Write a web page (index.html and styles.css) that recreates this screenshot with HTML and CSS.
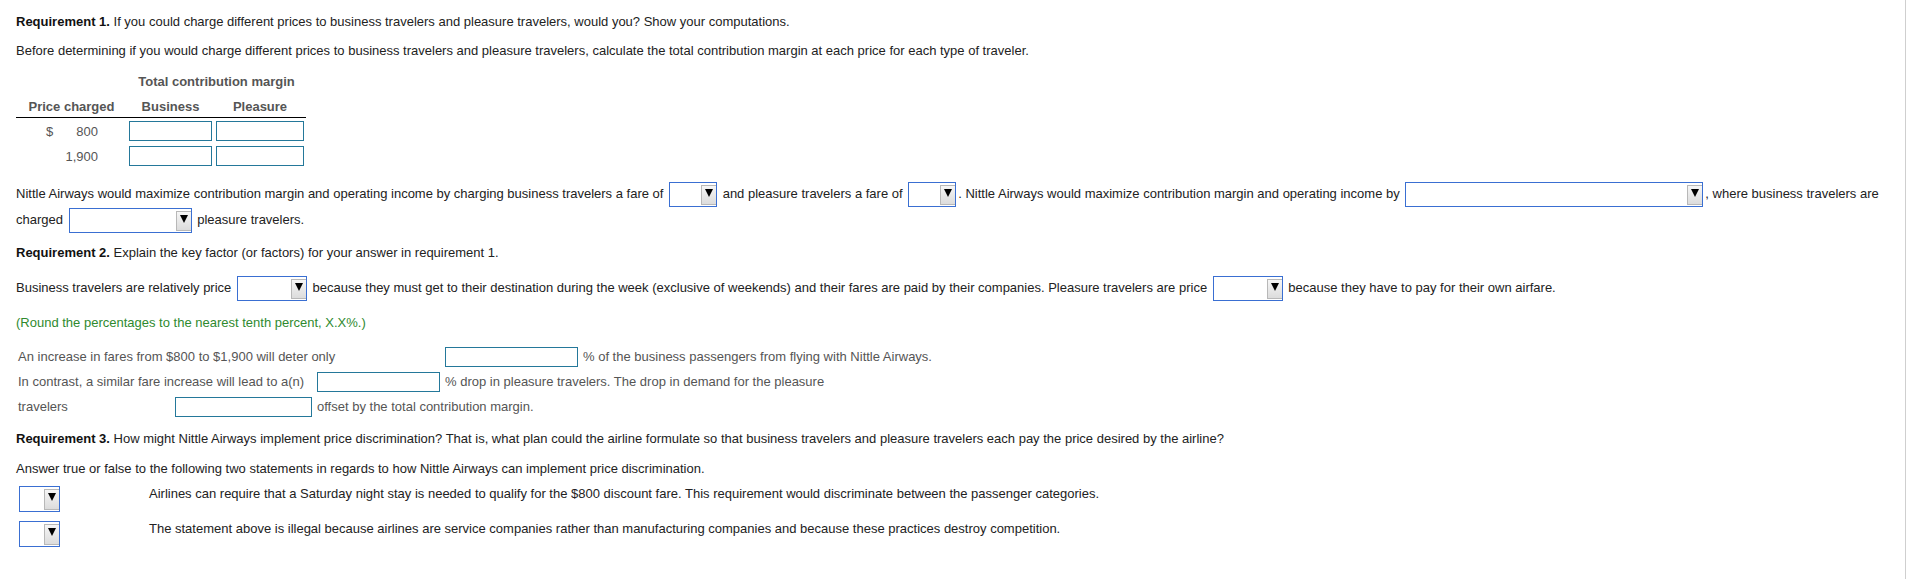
FILE: index.html
```html
<!DOCTYPE html>
<html lang="en">
<head>
<meta charset="utf-8">
<title>Requirements</title>
<link rel="stylesheet" href="styles.css">
</head>
<body>
<div class="page">
  <p class="line req-first"><b>Requirement 1.</b> If you could charge different prices to business travelers and pleasure travelers, would you? Show your computations.</p>
  <p class="line intro">Before determining if you would charge different prices to business travelers and pleasure travelers, calculate the total contribution margin at each price for each type of traveler.</p>

  <div class="cm-table">
    <div class="cm-cap">Total contribution margin</div>
    <div class="cm-head">Price charged</div>
    <div class="cm-head">Business</div>
    <div class="cm-head">Pleasure</div>

    <div class="cm-label"><span class="cur">$</span><span class="num">800</span></div>
    <div class="cm-cell"><span class="inp w83"></span></div>
    <div class="cm-cell"><span class="inp w88"></span></div>

    <div class="cm-label"><span class="num">1,900</span></div>
    <div class="cm-cell"><span class="inp w83"></span></div>
    <div class="cm-cell"><span class="inp w88"></span></div>
  </div>

  <p class="line-dd fare">Nittle Airways would maximize contribution margin and operating income by charging business travelers a fare of <span class="dd w48"><span class="dd-in"><span class="dd-btn"><svg width="8" height="8" viewBox="0 0 8 8"><polygon points="0,0 8,0 4,8" fill="#000"/></svg></span></span></span> and pleasure travelers a fare of <span class="dd w48"><span class="dd-in"><span class="dd-btn"><svg width="8" height="8" viewBox="0 0 8 8"><polygon points="0,0 8,0 4,8" fill="#000"/></svg></span></span></span>. Nittle Airways would maximize contribution margin and operating income by <span class="dd w298"><span class="dd-in"><span class="dd-btn"><svg width="8" height="8" viewBox="0 0 8 8"><polygon points="0,0 8,0 4,8" fill="#000"/></svg></span></span></span>, where business travelers are charged <span class="dd w123"><span class="dd-in"><span class="dd-btn"><svg width="8" height="8" viewBox="0 0 8 8"><polygon points="0,0 8,0 4,8" fill="#000"/></svg></span></span></span> pleasure travelers.</p>

  <p class="line req-two"><b>Requirement 2.</b> Explain the key factor (or factors) for your answer in requirement 1.</p>

  <p class="line-dd elastic">Business travelers are relatively price <span class="dd w70"><span class="dd-in"><span class="dd-btn"><svg width="8" height="8" viewBox="0 0 8 8"><polygon points="0,0 8,0 4,8" fill="#000"/></svg></span></span></span> because they must get to their destination during the week (exclusive of weekends) and their fares are paid by their companies. Pleasure travelers are price <span class="dd w70"><span class="dd-in"><span class="dd-btn"><svg width="8" height="8" viewBox="0 0 8 8"><polygon points="0,0 8,0 4,8" fill="#000"/></svg></span></span></span> because they have to pay for their own airfare.</p>

  <p class="line note">(Round the percentages to the nearest tenth percent, X.X%.)</p>

  <div class="pct">
    <div class="pt c1-4">An increase in fares from $800 to $1,900 will deter only</div>
    <div class="pi"><span class="inp w133"></span></div>
    <div class="pt">% of the business passengers from flying with Nittle Airways.</div>

    <div class="pt c1-3">In contrast, a similar fare increase will lead to a(n)</div>
    <div class="pi"><span class="inp w123"></span></div>
    <div class="pt c4-6">% drop in pleasure travelers. The drop in demand for the pleasure</div>

    <div class="pt">travelers</div>
    <div class="pi"><span class="inp w137"></span></div>
    <div class="pt c3-6">offset by the total contribution margin.</div>
  </div>

  <p class="line req-three"><b>Requirement 3.</b> How might Nittle Airways implement price discrimination? That is, what plan could the airline formulate so that business travelers and pleasure travelers each pay the price desired by the airline?</p>

  <p class="line answer">Answer true or false to the following two statements in regards to how Nittle Airways can implement price discrimination.</p>

  <div class="tf">
    <span class="dd tf-dd"><span class="dd-in"><span class="dd-btn"><svg width="8" height="8" viewBox="0 0 8 8"><polygon points="0,0 8,0 4,8" fill="#000"/></svg></span></span></span>
    <span class="tf-text">Airlines can require that a Saturday night stay is needed to qualify for the $800 discount fare. This requirement would discriminate between the passenger categories.</span>
  </div>
  <div class="tf">
    <span class="dd tf-dd"><span class="dd-in"><span class="dd-btn"><svg width="8" height="8" viewBox="0 0 8 8"><polygon points="0,0 8,0 4,8" fill="#000"/></svg></span></span></span>
    <span class="tf-text">The statement above is illegal because airlines are service companies rather than manufacturing companies and because these practices destroy competition.</span>
  </div>
</div>
</body>
</html>
```

FILE: styles.css
```css
html, body {
  margin: 0;
  padding: 0;
  background: #fff;
}

body {
  font-family: "Liberation Sans", Arial, sans-serif;
  font-size: 13px;
  color: #222;
}

.page {
  box-sizing: border-box;
  width: 1906px;
  height: 579px;
  padding: 14px 0 0 16px;
  border-right: 1px solid #cfcfcf;
  overflow: hidden;
}

p {
  margin: 0;
}

.line {
  line-height: 16px;
  white-space: nowrap;
}

.line-dd {
  line-height: 16px;
}

b {
  font-weight: bold;
  color: #111;
}

.intro { margin-top: 13px; }

/* contribution margin table */
.cm-table {
  margin-top: 15px;
  display: grid;
  grid-template-columns: 111px 87px 92px;
  width: 290px;
  color: #555;
}

.cm-cap {
  grid-column: 2 / 4;
  text-align: center;
  font-weight: bold;
  line-height: 16px;
  padding-bottom: 9px;
}

.cm-head {
  text-align: center;
  font-weight: bold;
  line-height: 16px;
  padding-bottom: 2px;
  border-bottom: 1px solid #000;
}

.cm-label {
  height: 25px;
  box-sizing: border-box;
  display: flex;
  padding: 6px 29px 0 30px;
  line-height: 16px;
}

.cm-label .num {
  margin-left: auto;
}

.cm-cell {
  height: 25px;
  box-sizing: border-box;
  padding: 3px 0 0 2px;
}

.inp {
  display: block;
  box-sizing: border-box;
  height: 20px;
  border: 1px solid #24789a;
  background: #fff;
}

.w83 { width: 83px; }
.w88 { width: 88px; }
.w133 { width: 133px; }
.w123 { width: 123px; }
.w137 { width: 137px; }

/* dropdowns */
.dd {
  display: inline-block;
  overflow: hidden;
  vertical-align: -9px;
  box-sizing: border-box;
  height: 25px;
  margin: 1px 2px 0 2px;
  padding: 2px 0 1px 0;
  border: 1px solid #3a6fd2;
  background: #fff;
}

.dd.w48 { width: 48px; }
.dd.w298 { width: 298px; }
.dd.w123 { width: 123px; }
.dd.w70 { width: 70px; }

.dd-in {
  display: flex;
  justify-content: flex-end;
  height: 100%;
}

.dd-btn {
  box-sizing: border-box;
  width: 15px;
  height: 100%;
  display: flex;
  justify-content: center;
  align-items: flex-start;
  padding-top: 3px;
  background: linear-gradient(#f6f6f6, #dcdcdc);
  border: 1px solid #b8b8b8;
  border-right: 0;
}

.dd-btn svg {
  display: block;
}

.fare { margin-top: 13px; }

.req-two { margin-top: 12px; }

.elastic { margin-top: 14px; }

.note {
  margin-top: 14px;
  color: #2f8a2f;
}

/* percentage rows */
.pct {
  margin-top: 14px;
  margin-left: 2px;
  display: grid;
  grid-template-columns: 157px 142px 128px 138px 1fr;
  grid-auto-rows: 25px;
  color: #555;
}

.pt {
  padding-top: 4px;
  line-height: 16px;
  white-space: nowrap;
}

.pi {
  padding-top: 2px;
}

.c1-4 { grid-column: 1 / 4; }
.c1-3 { grid-column: 1 / 3; }
.c4-6 { grid-column: 4 / 6; }
.c3-6 { grid-column: 3 / 6; }

.req-three { margin-top: 11px; }

.answer { margin-top: 14px; }

/* true / false rows */
.tf {
  display: flex;
  align-items: flex-start;
  margin-top: 9px;
}

.dd.tf-dd {
  width: 41px;
  height: 26px;
  margin: 0 0 0 3px;
  flex: none;
}

.tf-text {
  margin-left: 89px;
  line-height: 16px;
  white-space: nowrap;
}
```
